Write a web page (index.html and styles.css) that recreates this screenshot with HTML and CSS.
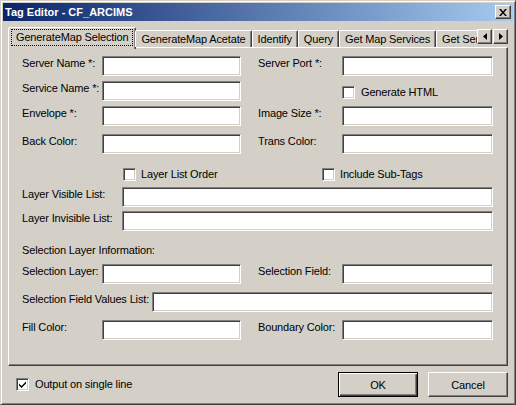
FILE: index.html
```html
<!DOCTYPE html>
<html lang="en">
<head>
    <meta charset="UTF-8">
    <title>Tag Editor - CF_ARCIMS</title>
    <link rel="stylesheet" href="styles.css">
</head>
<body>
    <div class="window">
        <div class="titlebar">
            <span class="title">Tag Editor - CF_ARCIMS</span>
            <span class="close">
                <svg width="8" height="7" viewBox="0 0 8 7"><path d="M0 0h2l2 2.5L6 0h2L5 3.5 8 7H6L4 4.5 2 7H0l3-3.5z" fill="#000"/></svg>
            </span>
        </div>

        <div class="main">
            <div class="tabrow">
                <div class="tabs">
                    <div class="tab active"><span class="focus">GenerateMap Selection</span></div>
                    <div class="tab">GenerateMap Acetate</div>
                    <div class="tab">Identify</div>
                    <div class="tab">Query</div>
                    <div class="tab">Get Map Services</div>
                    <div class="tab">Get Service Info</div>
                </div>
                <div class="scroller">
                    <span class="arrow"><svg width="4" height="7" viewBox="0 0 4 7"><path d="M4 0v7L0 3.5z" fill="#000"/></svg></span>
                    <span class="arrow"><svg width="4" height="7" viewBox="0 0 4 7"><path d="M0 0v7l4-3.5z" fill="#000"/></svg></span>
                </div>
            </div>

            <div class="panel">
                <div class="row r1">
                    <label class="lbl">Server Name *:</label>
                    <div class="field"></div>
                    <label class="lbl right">Server Port *:</label>
                    <div class="field wide"></div>
                </div>
                <div class="row r2">
                    <label class="lbl">Service Name *:</label>
                    <div class="field"></div>
                    <div class="check-item gen">
                        <span class="box"></span>Generate HTML
                    </div>
                </div>
                <div class="row r2">
                    <label class="lbl">Envelope *:</label>
                    <div class="field"></div>
                    <label class="lbl right">Image Size *:</label>
                    <div class="field wide"></div>
                </div>
                <div class="row r4">
                    <label class="lbl">Back Color:</label>
                    <div class="field"></div>
                    <label class="lbl right">Trans Color:</label>
                    <div class="field wide"></div>
                </div>

                <div class="checks">
                    <div class="check-item order"><span class="box"></span>Layer List Order</div>
                    <div class="check-item"><span class="box"></span>Include Sub-Tags</div>
                </div>

                <div class="row lv">
                    <label class="lbl layer">Layer Visible List:</label>
                    <div class="field grow"></div>
                </div>
                <div class="row li">
                    <label class="lbl layer">Layer Invisible List:</label>
                    <div class="field grow"></div>
                </div>

                <div class="section">Selection Layer Information:</div>

                <div class="row sl">
                    <label class="lbl">Selection Layer:</label>
                    <div class="field"></div>
                    <label class="lbl right">Selection Field:</label>
                    <div class="field wide"></div>
                </div>
                <div class="row sv">
                    <label class="lbl values">Selection Field Values List:</label>
                    <div class="field grow"></div>
                </div>
                <div class="row sv">
                    <label class="lbl">Fill Color:</label>
                    <div class="field"></div>
                    <label class="lbl right">Boundary Color:</label>
                    <div class="field wide"></div>
                </div>
            </div>

            <div class="footer">
                <div class="check-item single">
                    <span class="box">
                        <svg width="9" height="9" viewBox="0 0 9 9"><path d="M1 3.5l2.5 2.5L8 1.5v2L3.5 8 1 5.5z" fill="#000"/></svg>
                    </span>Output on single line
                </div>
                <div class="button default">OK</div>
                <div class="button">Cancel</div>
            </div>
        </div>
    </div>
</body>
</html>
```

FILE: styles.css
```css
body {
    margin: 0;
    background-color: #D4D0C8;
    font-family: "Liberation Sans", Arial, sans-serif;
    font-size: 11px;
    letter-spacing: -0.15px;
    color: #000;
    overflow: hidden;
}
.window {
    width: 516px;
    height: 405px;
    box-sizing: border-box;
    border: 1px solid;
    border-color: #D4D0C8 #404040 #404040 #D4D0C8;
    box-shadow: inset 1px 1px #FFFFFF, inset -1px -1px #808080;
    padding: 2px;
    display: flex;
    flex-direction: column;
}
.titlebar {
    height: 18px;
    display: flex;
    align-items: center;
    padding: 0 2px 0 2px;
    background: linear-gradient(to right, #0A246A, #A6CAF0);
}
.title {
    flex: 1;
    color: #FFFFFF;
    font-weight: bold;
    letter-spacing: 0;
}
.close {
    width: 16px;
    height: 14px;
    box-sizing: border-box;
    display: flex;
    align-items: center;
    justify-content: center;
    background-color: #D4D0C8;
    border: 1px solid;
    border-color: #FFFFFF #404040 #404040 #FFFFFF;
    box-shadow: inset -1px -1px #808080;
}
.main {
    flex: 1;
    display: flex;
    flex-direction: column;
    padding: 6px 5px 5px 5px;
}

/* tabs */
.tabrow {
    height: 20px;
    display: flex;
    align-items: flex-end;
    position: relative;
    z-index: 1;
}
.tabs {
    flex: 1;
    display: flex;
    align-items: flex-end;
    overflow: hidden;
    height: 22px;
    margin-bottom: -2px;
    padding-left: 2px;
    align-self: flex-start;
}
.tab {
    height: 17px;
    box-sizing: border-box;
    padding: 0 5px;
    margin-bottom: 2px;
    display: flex;
    align-items: center;
    white-space: nowrap;
    border-top: 1px solid #FFFFFF;
    border-left: 1px solid #FFFFFF;
    border-right: 1px solid #404040;
    box-shadow: inset -1px 0 #808080;
    border-radius: 2px 2px 0 0;
    flex-shrink: 0;
}
.tab.active {
    height: 22px;
    margin: 0 -1px 0 -2px;
    padding: 0 2px 0 2px;
    background-color: #D4D0C8;
    align-items: flex-start;
    padding-top: 1px;
}
.focus {
    border: 1px dotted #000;
    padding: 1px 4px 2px 4px;
}
.scroller {
    display: flex;
    gap: 1px;
    align-self: flex-start;
    margin-top: 2px;
}
.arrow {
    width: 15px;
    height: 15px;
    box-sizing: border-box;
    display: flex;
    align-items: center;
    justify-content: center;
    border: 1px solid;
    border-color: #FFFFFF #404040 #404040 #FFFFFF;
    box-shadow: inset -1px -1px #808080;
}

/* panel */
.panel {
    flex: 1;
    box-sizing: border-box;
    border: 1px solid;
    border-color: #FFFFFF #404040 #404040 #FFFFFF;
    box-shadow: inset -1px -1px #808080;
    padding: 8px 0 0 13px;
    display: flex;
    flex-direction: column;
}
.row {
    display: flex;
    align-items: flex-start;
    height: 20px;
}
.r2 { margin-top: 5px; }
.r4 { margin-top: 8px; }
.lv { margin-top: 6px; }
.li { margin-top: 4px; }
.sl { margin-top: 7px; }
.sv { margin-top: 8px; }
.lbl {
    width: 80px;
    line-height: 13px;
    padding-top: 1px;
    white-space: nowrap;
}
.lbl.right {
    width: 84px;
    margin-left: 17px;
}
.lbl.layer { width: 100px; }
.lbl.values { width: 130px; }
.field {
    width: 139px;
    height: 20px;
    box-sizing: border-box;
    background-color: #FFFFFF;
    border: 1px solid;
    border-color: #808080 #FFFFFF #FFFFFF #808080;
    box-shadow: inset 1px 1px #404040, inset -1px -1px #D4D0C8;
}
.field.wide { width: 151px; }
.lv .field.grow, .li .field.grow { width: 371px; }
.sv .field.grow { width: 341px; }

.check-item {
    display: flex;
    align-items: center;
    gap: 5px;
    line-height: 13px;
    white-space: nowrap;
}
.box {
    width: 13px;
    height: 13px;
    box-sizing: border-box;
    display: flex;
    align-items: center;
    justify-content: center;
    background-color: #FFFFFF;
    border: 1px solid;
    border-color: #808080 #FFFFFF #FFFFFF #808080;
    box-shadow: inset 1px 1px #404040, inset -1px -1px #D4D0C8;
}
.gen {
    margin-left: 101px;
    margin-top: 5px;
    gap: 6px;
}
.checks {
    display: flex;
    margin-top: 14px;
    height: 13px;
}
.order {
    margin-left: 101px;
    width: 199px;
}
.section {
    margin-top: 13px;
    line-height: 13px;
}

/* footer */
.footer {
    display: flex;
    align-items: center;
    margin-top: 6px;
    height: 25px;
}
.single {
    flex: 1;
    padding-left: 8px;
    gap: 6px;
}
.button {
    width: 80px;
    height: 25px;
    box-sizing: border-box;
    display: flex;
    align-items: center;
    justify-content: center;
    margin-left: 10px;
    border: 1px solid;
    border-color: #FFFFFF #404040 #404040 #FFFFFF;
    box-shadow: inset -1px -1px #808080;
}
.button.default {
    border-color: #000;
    box-shadow: inset 1px 1px #FFFFFF, inset -1px -1px #404040, inset -2px -2px #808080;
}
```
